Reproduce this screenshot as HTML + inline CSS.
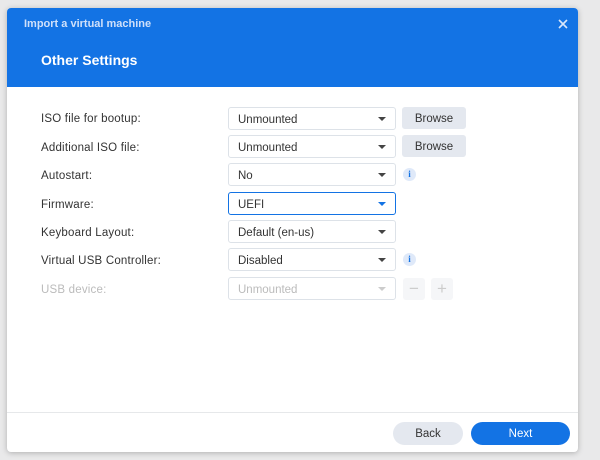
<!DOCTYPE html><html><head><style>
body{margin:0;width:600px;height:460px;background:#e9e9ea;font-family:"Liberation Sans",sans-serif;position:relative;overflow:hidden}
.dlg{position:absolute;left:7px;top:8px;width:571px;height:444px;background:#fff;border-radius:4px;box-shadow:0 1px 6px rgba(0,0,0,.25);overflow:hidden}
.hd{height:79px;background:#1373e4;color:#fff;position:relative}
.t1{position:absolute;left:17px;top:10px;font-size:11px;font-weight:bold;color:#cfe0fa}
.x{position:absolute;right:10px;top:11px}
.t2{position:absolute;left:34px;top:44px;font-size:14px;font-weight:bold}
.lb{position:absolute;left:41px;font-size:11.5px;color:#333;letter-spacing:.2px}
.sel{position:absolute;left:228px;width:168px;border:1px solid #dde2e8;border-radius:3px;box-sizing:border-box;font-size:11.5px;color:#333;padding:6px 0 0 9px;height:23px}
.sel:after{content:"";position:absolute;right:9px;top:9px;border-left:4px solid transparent;border-right:4px solid transparent;border-top:4px solid #444}
.sel.f{border-color:#1373e4}.sel.f:after{border-top-color:#1373e4}
.sel.d{color:#bbb}.sel.d:after{border-top-color:#ccc}
.br{position:absolute;left:402px;width:64px;height:22px;background:#e4e8ef;border-radius:3px;font-size:11.5px;color:#333;text-align:center;line-height:24px}
.i{position:absolute;left:403px;width:13px;height:13px;border-radius:50%;background:#dfe9f9;color:#1373e4;font-size:9px;font-weight:bold;text-align:center;line-height:13px;font-family:"Liberation Serif",serif}
.pm{position:absolute;top:278px;width:22px;height:22px;background:#f5f6f8;border-radius:3px;color:#ccc;text-align:center;line-height:21px;font-size:17px}
.ft{position:absolute;left:0;right:0;top:404px;border-top:1px solid #e6e8ea}
.b{position:absolute;top:422px;height:23px;border-radius:12px;font-size:11.5px;text-align:center;line-height:25px}
</style></head><body>
<div class="dlg"><div class="hd"><div class="t1">Import a virtual machine</div><svg class="x" width="10" height="10" viewBox="0 0 10 10"><path d="M1 1L9 9M9 1L1 9" stroke="#d8e6fb" stroke-width="1.6"/></svg><div class="t2">Other Settings</div></div><div class="ft"></div></div>
<div class="lb" style="top:113px">ISO file for bootup:</div>
<div class="lb" style="top:142px">Additional ISO file:</div>
<div class="lb" style="top:170px">Autostart:</div>
<div class="lb" style="top:199px">Firmware:</div>
<div class="lb" style="top:227px">Keyboard Layout:</div>
<div class="lb" style="top:255px">Virtual USB Controller:</div>
<div class="lb" style="top:284px;color:#bbb">USB device:</div>
<div class="sel" style="top:107px">Unmounted</div><div class="br" style="top:107px">Browse</div>
<div class="sel" style="top:135px">Unmounted</div><div class="br" style="top:135px">Browse</div>
<div class="sel" style="top:163px">No</div><div class="i" style="top:168px">i</div>
<div class="sel f" style="top:192px">UEFI</div>
<div class="sel" style="top:220px">Default (en-us)</div>
<div class="sel" style="top:248px">Disabled</div><div class="i" style="top:253px">i</div>
<div class="sel d" style="top:277px">Unmounted</div>
<div class="pm" style="left:403px">−</div><div class="pm" style="left:431px">+</div>
<div class="b" style="left:393px;width:70px;background:#e4e8ef;color:#333">Back</div>
<div class="b" style="left:471px;width:99px;background:#1373e4;color:#fff">Next</div>
</body></html>
